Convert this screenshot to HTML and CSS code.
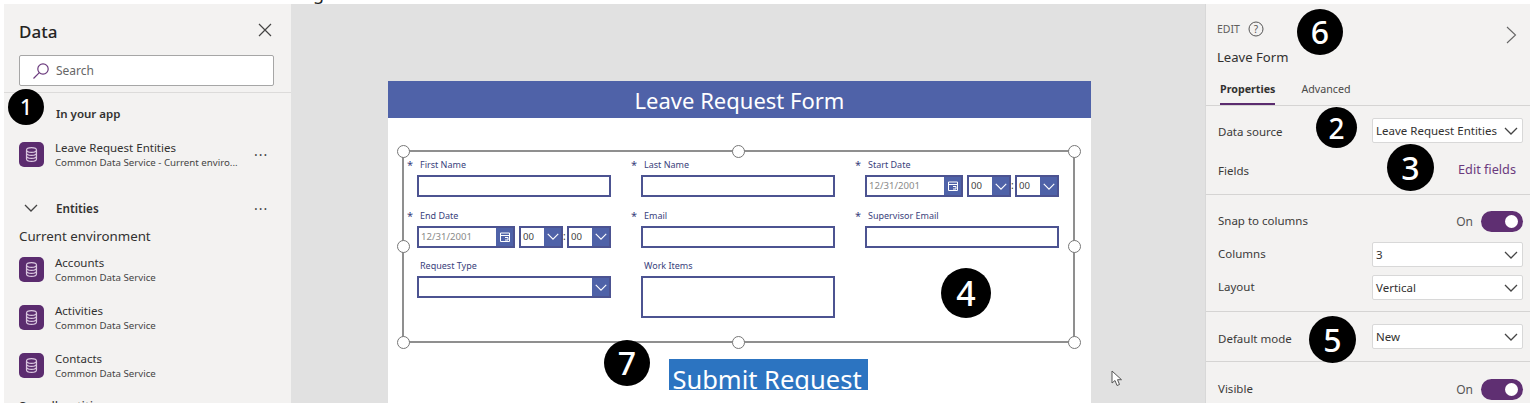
FILE: index.html

```html
<!DOCTYPE html>
<html lang="en">
<head>
  <meta charset="UTF-8" />
  <title>Leave Request Form</title>
  <link rel="stylesheet" href="styles.css">
</head>
<body>
  <svg class="sprites" width="0" height="0">
    <symbol id="db" viewBox="0 0 25 25">
      <g fill="none" stroke="#d9c6df" stroke-width="1.2">
        <ellipse cx="12.5" cy="8" rx="5" ry="2.4"/>
        <path d="M7.5 8v9c0 1.4 2.2 2.4 5 2.4s5-1 5-2.4V8"/>
        <path d="M7.5 11c0 1.4 2.2 2.4 5 2.4s5-1 5-2.4"/>
        <path d="M7.5 14c0 1.4 2.2 2.4 5 2.4s5-1 5-2.4"/>
      </g>
    </symbol>
    <symbol id="chev" viewBox="0 0 16 10">
      <path d="M2 2l6 6 6-6" fill="none" stroke="currentColor" stroke-width="1.3"/>
    </symbol>
    <symbol id="cal" viewBox="0 0 12 12">
      <path d="M1.5 2h9v8.500h-9zM1.500 4.500h9M6 6.500h3v2.500h-3" fill="none" stroke="#fff" stroke-width="1"/>
    </symbol>
  </svg>

  <div class="top-strip"><span>g</span></div>

  <div class="app">
    <aside class="data-panel">
      <div class="data-head">
        <h2>Data</h2>
        <svg class="close" width="14" height="14" viewBox="0 0 14 14"><path d="M1 1l12 12M13 1L1 13" stroke="#444" stroke-width="1.2"/></svg>
      </div>
      <div class="search">
        <svg width="18" height="18" viewBox="0 0 18 18"><circle cx="11" cy="7" r="5.200" fill="none" stroke="#6b3a7d" stroke-width="1.200"/><path d="M7.300 10.700L1.500 16.500" stroke="#6b3a7d" stroke-width="1.200"/></svg>
        <span>Search</span>
      </div>
      <div class="app-section">In your app</div>
      <div class="source first-source">
        <svg class="db-icon"><use href="#db"/></svg>
        <div class="source-text">
          <div class="source-name">Leave Request Entities</div>
          <div class="source-sub">Common Data Service - Current enviro...</div>
        </div>
        <div class="dots">...</div>
      </div>
      <div class="entities-row">
        <svg class="entities-chev" width="18" height="10"><use href="#chev"/></svg>
        <span>Entities</span>
        <div class="dots">...</div>
      </div>
      <div class="env">Current environment</div>
      <div class="source">
        <svg class="db-icon"><use href="#db"/></svg>
        <div class="source-text">
          <div class="source-name">Accounts</div>
          <div class="source-sub">Common Data Service</div>
        </div>
      </div>
      <div class="source">
        <svg class="db-icon"><use href="#db"/></svg>
        <div class="source-text">
          <div class="source-name">Activities</div>
          <div class="source-sub">Common Data Service</div>
        </div>
      </div>
      <div class="source">
        <svg class="db-icon"><use href="#db"/></svg>
        <div class="source-text">
          <div class="source-name">Contacts</div>
          <div class="source-sub">Common Data Service</div>
        </div>
      </div>
      <div class="see-all">See all entities</div>
    </aside>

    <main class="canvas">
      <div class="sheet">
        <div class="sheet-title">Leave Request Form</div>
        <div class="frame">
          <i class="handle tl"></i><i class="handle tc"></i><i class="handle tr"></i>
          <i class="handle ml"></i><i class="handle mr"></i>
          <i class="handle bl"></i><i class="handle bc"></i><i class="handle br"></i>
          <div class="form-grid">
            <div class="field req">
              <label>First Name</label>
              <div class="input"></div>
            </div>
            <div class="field req">
              <label>Last Name</label>
              <div class="input"></div>
            </div>
            <div class="field req">
              <label>Start Date</label>
              <div class="date-row">
                <div class="date-box"><span>12/31/2001</span><b><svg width="12" height="12"><use href="#cal"/></svg></b></div>
                <div class="time-box"><span>00</span><b><svg width="14" height="9"><use href="#chev"/></svg></b></div>
                <div class="time-box"><span>00</span><b><svg width="14" height="9"><use href="#chev"/></svg></b></div>
                <em>:</em>
              </div>
            </div>
            <div class="field req">
              <label>End Date</label>
              <div class="date-row">
                <div class="date-box"><span>12/31/2001</span><b><svg width="12" height="12"><use href="#cal"/></svg></b></div>
                <div class="time-box"><span>00</span><b><svg width="14" height="9"><use href="#chev"/></svg></b></div>
                <div class="time-box"><span>00</span><b><svg width="14" height="9"><use href="#chev"/></svg></b></div>
                <em>:</em>
              </div>
            </div>
            <div class="field req">
              <label>Email</label>
              <div class="input"></div>
            </div>
            <div class="field req">
              <label>Supervisor Email</label>
              <div class="input"></div>
            </div>
            <div class="field">
              <label>Request Type</label>
              <div class="input combo"><b><svg width="14" height="9"><use href="#chev"/></svg></b></div>
            </div>
            <div class="field">
              <label>Work Items</label>
              <div class="input tall"></div>
            </div>
          </div>
        </div>
        <div class="submit">Submit Request</div>
      </div>
      <svg class="cursor" width="12" height="18" viewBox="0 0 12 18"><path d="M1 1v12l3-2.500 2 5 2.500-1-2-4.800 4 0z" fill="#fff" stroke="#555" stroke-width="1"/></svg>
    </main>

    <aside class="props">
      <div class="props-head">
        <div class="edit-row">
          <span>EDIT</span>
          <svg width="16" height="16" viewBox="0 0 16 16"><circle cx="8" cy="8" r="7" fill="none" stroke="#555" stroke-width="1"/><text x="8" y="11.500" text-anchor="middle" class="help-mark">?</text></svg>
        </div>
        <div class="form-name">Leave Form</div>
        <svg class="head-chev" width="11" height="18" viewBox="0 0 11 18"><path d="M1 1l8.500 8L1 17" fill="none" stroke="#666" stroke-width="1.100"/></svg>
      </div>
      <div class="tabs">
        <div class="tab active">Properties</div>
        <div class="tab">Advanced</div>
      </div>
      <section class="group group-source">
        <div class="prop-row">
          <label>Data source</label>
          <div class="select"><span>Leave Request Entities</span><svg width="16" height="10"><use href="#chev"/></svg></div>
        </div>
        <div class="prop-row fields-row">
          <label>Fields</label>
          <a class="edit-fields">Edit fields</a>
        </div>
      </section>
      <section class="group group-layout">
        <div class="prop-row toggle-row">
          <label>Snap to columns</label>
          <div class="toggle-wrap"><span>On</span><i class="toggle"></i></div>
        </div>
        <div class="prop-row">
          <label>Columns</label>
          <div class="select"><span>3</span><svg width="16" height="10"><use href="#chev"/></svg></div>
        </div>
        <div class="prop-row">
          <label>Layout</label>
          <div class="select"><span>Vertical</span><svg width="16" height="10"><use href="#chev"/></svg></div>
        </div>
      </section>
      <section class="group group-mode">
        <div class="prop-row">
          <label>Default mode</label>
          <div class="select"><span>New</span><svg width="16" height="10"><use href="#chev"/></svg></div>
        </div>
      </section>
      <section class="group group-visible">
        <div class="prop-row toggle-row">
          <label>Visible</label>
          <div class="toggle-wrap"><span>On</span><i class="toggle"></i></div>
        </div>
      </section>
    </aside>

    <div class="badge b1">1</div>
    <div class="badge b2">2</div>
    <div class="badge b3">3</div>
    <div class="badge b4">4</div>
    <div class="badge b5">5</div>
    <div class="badge b6">6</div>
    <div class="badge b7">7</div>
  </div>
</body>
</html>
```

FILE: styles.css

```css
* {
  box-sizing: border-box;
}
body {
  margin: 0;
  height: 410px;
  overflow: hidden;
  background: #fff;
  font-family: "Noto Sans", "Open Sans", sans-serif;
  color: #323130;
}
.sprites {
  position: absolute;
}
.top-strip {
  height: 4px;
  overflow: hidden;
  padding-left: 313px;
  font-size: 18px;
  line-height: 4px;
  color: #222;
}
.top-strip span {
  display: block;
  margin-top: -9px;
}
.app {
  position: relative;
  display: flex;
  width: 1526px;
  height: 399px;
  margin-left: 4px;
  overflow: hidden;
}

/* left data panel */
.data-panel {
  width: 287px;
  flex: none;
  background: #f3f2f1;
}
.data-head {
  display: flex;
  justify-content: space-between;
  align-items: center;
  height: 51px;
  padding: 3px 19px 0 15px;
}
.data-head h2 {
  margin: 0;
  font-size: 17px;
  font-weight: 500;
  color: #252423;
}
.close {
  margin-top: -3px;
}
.search {
  display: flex;
  align-items: center;
  gap: 6px;
  height: 31px;
  margin: 0 17px 0 15px;
  padding-left: 12px;
  background: #fff;
  border: 1px solid #a6a6a6;
  border-radius: 2px;
  font-size: 12px;
  color: #666;
}
.app-section {
  height: 50px;
  margin-top: 6px;
  padding: 13px 0 0 52px;
  border-top: 1px solid #dcdbda;
  font-size: 11.500px;
  font-weight: 600;
}
.source {
  display: flex;
  gap: 11px;
  height: 48px;
  padding: 0 17px 0 15px;
}
.first-source {
  height: 55px;
}
.db-icon {
  width: 25px;
  height: 25px;
  flex: none;
  background: #5b2c6f;
  border-radius: 5px;
}
.source-text {
  flex: 1;
  margin-top: -2px;
}
.source-name {
  font-size: 11.500px;
  line-height: 16px;
}
.source-sub {
  font-size: 9.700px;
  line-height: 14px;
  color: #444;
}
.dots {
  width: 20px;
  margin-top: 2px;
  font-size: 14px;
  line-height: 14px;
  letter-spacing: 1px;
  color: #444;
}
.entities-row {
  display: flex;
  align-items: center;
  height: 22px;
  padding: 0 17px 0 18px;
  font-size: 11.700px;
  font-weight: 600;
}
.entities-chev {
  margin-right: 16px;
  color: #444;
}
.entities-row span {
  flex: 1;
}
.entities-row .dots {
  margin-top: -6px;
  font-weight: 400;
}
.env {
  height: 38px;
  padding: 7px 0 0 15px;
  font-size: 13.300px;
  line-height: 20px;
}
.see-all {
  margin-top: -4px;
  padding-left: 15px;
  font-size: 13px;
}

/* canvas */
.canvas {
  position: relative;
  flex: 1;
  padding: 77px 0 0 97px;
  background: #e1e1e1;
  overflow: hidden;
}
.sheet {
  width: 703px;
  height: 330px;
  background: #fff;
}
.sheet-title {
  height: 37px;
  background: #4f62a8;
  color: #fff;
  font-size: 22px;
  line-height: 39px;
  text-align: center;
}
.frame {
  position: relative;
  width: 673px;
  height: 193px;
  margin: 32px 0 0 14px;
  border: 2px solid #8f8f8f;
}
.handle {
  position: absolute;
  width: 13px;
  height: 13px;
  background: #fff;
  border: 1px solid #777;
  border-radius: 50%;
}
.tl, .tc, .tr { top: -7px; }
.ml, .mr { top: 88px; }
.bl, .bc, .br { bottom: -8px; }
.tl, .ml, .bl { left: -7px; }
.tc, .bc { left: 328px; }
.tr, .mr, .br { right: -8px; }
.form-grid {
  display: grid;
  grid-template-columns: repeat(3, 194px);
  column-gap: 30px;
  row-gap: 10.500px;
  align-items: start;
  padding: 5px 0 0 13px;
}
.field {
  position: relative;
}
.field label {
  display: block;
  height: 18px;
  padding-left: 3px;
  font-size: 9px;
  line-height: 15px;
  color: #3a3f7c;
}
.req::before {
  content: "*";
  position: absolute;
  left: -10px;
  top: -1px;
  font-size: 11px;
  line-height: 18px;
  color: #3a3f7c;
}
.input {
  height: 22px;
  background: #fff;
  border: 2px solid #4c5391;
}
.input.tall {
  height: 42px;
}
.combo {
  display: flex;
  justify-content: flex-end;
}
b {
  display: flex;
  align-items: center;
  justify-content: center;
  flex: none;
  width: 17px;
  background: #4f62a8;
  color: #fff;
}
.date-row {
  position: relative;
  display: flex;
  gap: 4px;
  height: 22px;
}
.date-row em {
  position: absolute;
  left: 146px;
  top: 3px;
  font-style: normal;
  font-size: 10px;
  line-height: 14px;
  color: #333;
}
.date-box, .time-box {
  display: flex;
  border: 2px solid #4c5391;
  font-size: 9.600px;
  line-height: 18px;
}
.date-box {
  width: 98px;
  color: #8a8a8a;
}
.time-box {
  width: 44px;
  color: #444;
}
.date-box span, .time-box span {
  flex: 1;
  padding-left: 2px;
}
.submit {
  width: 199px;
  height: 31px;
  margin: 16px 0 0 281px;
  padding-right: 3px;
  overflow: hidden;
  background: #2c74c1;
  color: #fff;
  font-size: 25.500px;
  line-height: 40px;
  text-align: center;
  white-space: nowrap;
}
.cursor {
  position: absolute;
  left: 820px;
  top: 366px;
}

/* right properties panel */
.props {
  width: 325px;
  flex: none;
  background: #f3f2f1;
  border-left: 1px solid #d8d8d8;
}
.props-head {
  position: relative;
  height: 74px;
  padding: 17px 0 0 11px;
}
.edit-row {
  display: flex;
  align-items: center;
  gap: 8px;
  font-size: 10.500px;
  color: #605e5c;
}
.help-mark {
  font-size: 10px;
  fill: #555;
}
.form-name {
  margin-top: 10px;
  font-size: 13.100px;
  line-height: 20px;
}
.head-chev {
  position: absolute;
  right: 13px;
  top: 22px;
}
.tabs {
  display: flex;
  gap: 26px;
  height: 28px;
  padding-left: 14px;
  border-bottom: 1px solid #d5d4d3;
}
.tab {
  height: 27px;
  font-size: 10.700px;
  line-height: 22px;
  color: #4a4948;
}
.tab.active {
  font-weight: 700;
  color: #323130;
  border-bottom: 2px solid #5b2c6f;
}
.group {
  padding: 0 7px 0 12px;
  border-bottom: 1px solid #d5d4d3;
}
.group-source {
  height: 89px;
  padding-top: 12px;
}
.group-layout {
  height: 117px;
  padding-top: 14px;
}
.group-mode {
  height: 50px;
  padding-top: 12px;
}
.group-visible {
  padding-top: 15px;
  border-bottom: none;
}
.prop-row {
  display: flex;
  justify-content: space-between;
  align-items: center;
  height: 25px;
  margin-bottom: 8px;
  font-size: 11.500px;
}
.prop-row label {
  color: #3b3a39;
}
.group-source label {
  padding-top: 2px;
}
.group-source .fields-row label,
.group-mode label {
  padding-top: 3px;
}
.group-layout label,
.group-visible label {
  padding-bottom: 2px;
}
.select {
  display: flex;
  justify-content: space-between;
  align-items: center;
  width: 151px;
  height: 25px;
  padding: 0 3px;
  background: #fff;
  border: 1px solid #d8d8d8;
  border-radius: 2px;
  font-size: 11.500px;
  white-space: nowrap;
}
.select svg {
  flex: none;
  color: #444;
}
.fields-row {
  margin-top: 13px;
}
.edit-fields {
  margin-right: 7px;
  font-size: 12.700px;
  color: #6b3a7d;
}
.toggle-row {
  margin-bottom: 8px;
}
.toggle-wrap {
  display: flex;
  align-items: center;
  gap: 8px;
  font-size: 12px;
  color: #555;
}
.toggle {
  position: relative;
  width: 42px;
  height: 21px;
  background: #5f2f72;
  border-radius: 11px;
}
.toggle::after {
  content: "";
  position: absolute;
  right: 5px;
  top: 4px;
  width: 13px;
  height: 13px;
  background: #fff;
  border-radius: 50%;
}

/* numbered callouts */
.badge {
  position: absolute;
  display: flex;
  align-items: center;
  justify-content: center;
  width: 46px;
  height: 46px;
  background: #000;
  border-radius: 50%;
  color: #fff;
  font-size: 32px;
  font-weight: 500;
  line-height: 1;
}
.b1 { left: 4px; top: 85px; width: 36px; height: 36px; font-size: 21px; }
.b2 { left: 1312px; top: 103px; width: 41px; height: 41px; font-size: 28px; }
.b3 { left: 1383px; top: 140px; width: 47px; height: 47px; }
.b4 { left: 937px; top: 264px; width: 50px; height: 50px; font-size: 34px; }
.b5 { left: 1305px; top: 312px; width: 47px; height: 47px; }
.b6 { left: 1293px; top: 5px; }
.b7 { left: 600px; top: 336px; }
```
